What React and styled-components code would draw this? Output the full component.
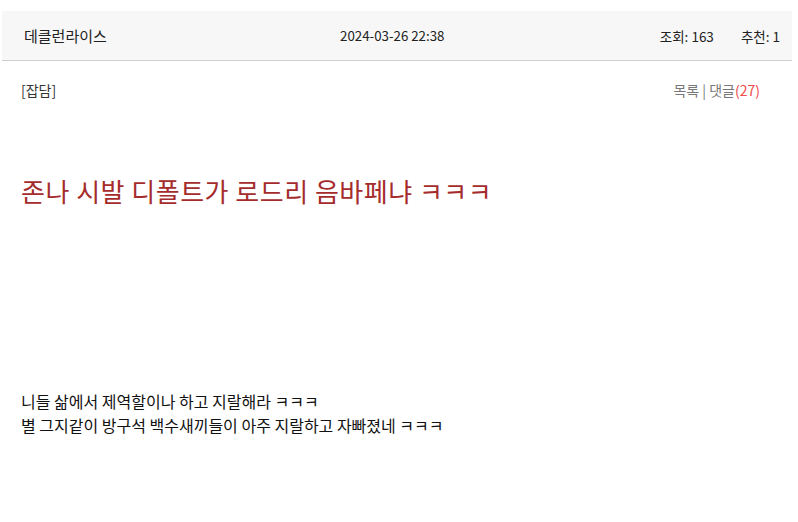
import React from "react";
import styled, { createGlobalStyle } from "styled-components";

const Global = createGlobalStyle`
  html, body { margin: 0; padding: 0; background: #fff; }
  body { font-family: "Noto Sans CJK KR", "Noto Sans", sans-serif; color: #222; }
`;

const Page = styled.div`
  padding: 11px 6px 0 2px;
`;

const InfoBar = styled.div`
  display: grid;
  grid-template-columns: 316px auto 1fr;
  align-items: center;
  height: 49px;
  padding: 0 12px 0 22px;
  background: #f7f7f7;
  border-bottom: 1px solid #cfcfcf;
  font-size: 13px;
  color: #222;
`;

const Nick = styled.span`
  font-size: 15px;
`;

const DateText = styled.span`
  font-size: 13.3px;
`;

const Stats = styled.div`
  display: flex;
  justify-content: flex-end;
  gap: 27px;
  font-size: 13.5px;
`;

const SubBar = styled.div`
  display: flex;
  justify-content: space-between;
  align-items: center;
  padding: 19px 32px 0 19px;
  font-size: 14px;
  line-height: 20px;
`;

const Category = styled.span`
  color: #333;
`;

const Links = styled.div`
  color: #777;
`;

const Count = styled.span`
  color: #f24b4b;
`;

const Title = styled.h1`
  margin: 74px 0 0 19px;
  font-size: 26px;
  font-weight: 400;
  line-height: 34px;
  letter-spacing: 0.5px;
  color: #a52c2c;
`;

const Body = styled.div`
  margin: 181px 0 0 19px;
  font-size: 16px;
  line-height: 24px;
  color: #111;
`;

const Line = styled.p`
  margin: 0;
`;

export default function App() {
  return (
    <Page>
      <Global />
      <InfoBar>
        <Nick>데클런라이스</Nick>
        <DateText>2024-03-26 22:38</DateText>
        <Stats>
          <span>조회: 163</span>
          <span>추천: 1</span>
        </Stats>
      </InfoBar>
      <SubBar>
        <Category>[잡담]</Category>
        <Links>
          목록 | 댓글<Count>(27)</Count>
        </Links>
      </SubBar>
      <Title>존나 시발 디폴트가 로드리 음바페냐 ㅋㅋㅋ</Title>
      <Body>
        <Line>니들 삶에서 제역할이나 하고 지랄해라 ㅋㅋㅋ</Line>
        <Line>별 그지같이 방구석 백수새끼들이 아주 지랄하고 자빠졌네 ㅋㅋㅋ</Line>
      </Body>
    </Page>
  );
}
